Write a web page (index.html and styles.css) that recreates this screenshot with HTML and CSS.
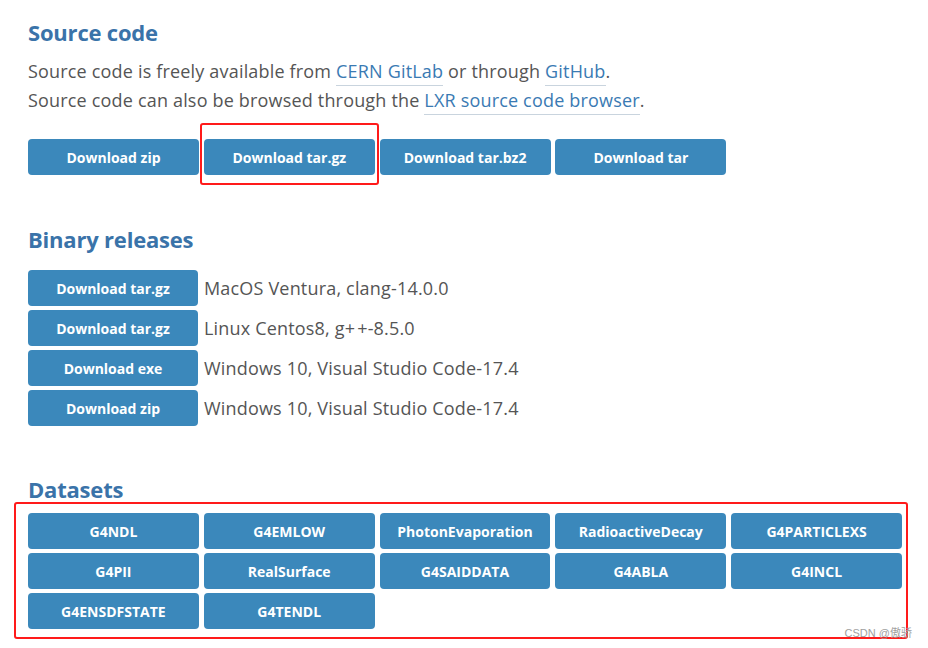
FILE: index.html
```html
<!DOCTYPE html>
<html>
<head>
<meta charset="utf-8">
<link rel="stylesheet" href="styles.css">
</head>
<body>
<div class="page">
  <h2 class="title first">Source code</h2>
  <p class="text">Source code is freely available from <a class="link" href="#">CERN GitLab</a> or through <a class="link" href="#">GitHub</a>.<br>Source code can also be browsed through the <a class="link" href="#">LXR source code browser</a>.</p>
  <div class="btn-row">
    <a class="btn" href="#">Download zip</a>
    <span class="marked"><a class="btn" href="#">Download tar.gz</a><span class="mark mark-small"></span></span>
    <a class="btn" href="#">Download tar.bz2</a>
    <a class="btn" href="#">Download tar</a>
  </div>

  <h2 class="title">Binary releases</h2>
  <div class="bin-list">
    <div class="bin-row"><a class="btn" href="#">Download tar.gz</a><span class="desc">MacOS Ventura, clang-14.0.0</span></div>
    <div class="bin-row"><a class="btn" href="#">Download tar.gz</a><span class="desc">Linux Centos8, g+&#8202;+-8.5.0</span></div>
    <div class="bin-row"><a class="btn" href="#">Download exe</a><span class="desc">Windows 10, Visual Studio Code-17.4</span></div>
    <div class="bin-row"><a class="btn" href="#">Download zip</a><span class="desc">Windows 10, Visual Studio Code-17.4</span></div>
  </div>

  <h2 class="title title-ds">Datasets</h2>
  <div class="datasets">
    <a class="btn" href="#">G4NDL</a>
    <a class="btn" href="#">G4EMLOW</a>
    <a class="btn" href="#">PhotonEvaporation</a>
    <a class="btn" href="#">RadioactiveDecay</a>
    <a class="btn" href="#">G4PARTICLEXS</a>
    <a class="btn" href="#">G4PII</a>
    <a class="btn" href="#">RealSurface</a>
    <a class="btn" href="#">G4SAIDDATA</a>
    <a class="btn" href="#">G4ABLA</a>
    <a class="btn" href="#">G4INCL</a>
    <a class="btn" href="#">G4ENSDFSTATE</a>
    <a class="btn" href="#">G4TENDL</a>
    <span class="mark mark-big"></span>
  </div>
</div>
<div class="watermark">CSDN @傲骄</div>
</body>
</html>
```

FILE: styles.css
```css
html, body {
  margin: 0;
  padding: 0;
  background: #ffffff;
}
body {
  font-family: "Open Sans", "Noto Sans", "Noto Sans CJK SC", sans-serif;
  color: #555555;
  width: 928px;
  height: 648px;
  overflow: hidden;
  position: relative;
}
.page {
  padding: 17px 0 0 28px;
}
.title {
  margin: 49px 0 0 0;
  font-size: 22px;
  line-height: 30px;
  font-weight: 700;
  color: #3a73a9;
  letter-spacing: -0.2px;
}
.title.first {
  margin-top: 0;
}
.title.title-ds {
  margin-top: 48px;
}
.text {
  margin: 10px 0 0 0;
  font-size: 18px;
  line-height: 29px;
  letter-spacing: 0.18px;
  color: #555555;
}
.link {
  color: #3a7ab3;
  text-decoration: none;
  border-bottom: 1px solid #c9d4de;
  padding-bottom: 2px;
}
.btn-row {
  margin-top: 24px;
  display: grid;
  grid-template-columns: repeat(4, 171px);
  column-gap: 4.8px;
}
.btn {
  display: flex;
  align-items: center;
  justify-content: center;
  box-sizing: border-box;
  height: 36px;
  background: #3b88bb;
  color: #ffffff;
  font-weight: 700;
  font-size: 14px;
  letter-spacing: 0;
  text-decoration: none;
  border-radius: 4px;
}
.marked {
  position: relative;
  display: block;
}
.mark {
  position: absolute;
  border: 2px solid #ff1a1a;
  border-radius: 3px;
  pointer-events: none;
}
.mark-small {
  left: -4px;
  top: -16px;
  width: 175px;
  height: 58px;
}
.bin-list {
  margin-top: 16px;
  display: flex;
  flex-direction: column;
  gap: 4px;
}
.bin-row {
  display: flex;
  align-items: center;
  gap: 6px;
}
.bin-row .btn {
  width: 170px;
}
.desc {
  font-size: 18px;
  letter-spacing: 0.18px;
  color: #555555;
}
.datasets {
  position: relative;
  margin-top: 9px;
  width: 874px;
  display: grid;
  grid-template-columns: repeat(5, 1fr);
  column-gap: 5px;
  row-gap: 4px;
}
.mark-big {
  left: -14px;
  top: -11px;
  width: 890px;
  height: 133px;
}
.watermark {
  position: absolute;
  right: 16px;
  bottom: 8px;
  font-family: "Liberation Sans", "Noto Sans CJK SC", sans-serif;
  font-size: 11px;
  color: #a0a0a0;
}
```
